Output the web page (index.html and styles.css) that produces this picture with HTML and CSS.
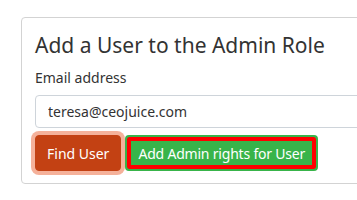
FILE: index.html
```html
<!DOCTYPE html>
<html lang="en">
<head>
  <meta charset="UTF-8" />
  <title>Admin Role</title>
  <link rel="stylesheet" href="styles.css">
</head>
<body>

  <div class="role-card">
    <h3>Add a User to the Admin Role</h3>
    <form id="roleForm">
      <label for="email">Email address</label>
      <input type="email" id="email" name="email" value="teresa@ceojuice.com" />
      <div class="button-row">
        <button type="button" class="find-button">Find User</button>
        <button type="submit" class="admin-button">Add Admin rights for User</button>
      </div>
    </form>
  </div>

</body>
</html>
```

FILE: styles.css
```css
body {
  font-family: "Noto Sans", "Open Sans", sans-serif;
  color: #333;
  background: #fff;
  margin: 0;
  padding: 17px 0 0 21px;
  overflow: hidden;
}

.role-card {
  width: 400px;
  border: 1px solid #d3d3d3;
  border-radius: 4px;
  padding: 14px 13px 12px 13px;
}

.role-card h3 {
  font-size: 21px;
  font-weight: normal;
  line-height: 26px;
  margin: 0 0 10px 0;
}

#roleForm label {
  display: block;
  font-size: 14px;
  line-height: 20px;
  margin-bottom: 7px;
}

#roleForm input {
  display: block;
  width: 100%;
  box-sizing: border-box;
  height: 33px;
  padding: 0 12px;
  font-family: inherit;
  font-size: 14px;
  color: #333;
  border: 1px solid #ced4da;
  border-radius: 4px;
  margin-bottom: 7px;
}

.button-row {
  display: flex;
  gap: 4px;
}

.button-row button {
  height: 36px;
  padding: 0 11px;
  font-family: inherit;
  font-size: 14px;
  color: #fff;
  border-radius: 4px;
  cursor: pointer;
}

.find-button {
  background-color: #c34113;
  border: 1px solid #c34113;
  box-shadow: 0 0 0 4px #f5b19a;
}

.admin-button {
  background-color: #38b44a;
  border: 2px solid #38b44a;
  box-shadow: inset 0 0 0 4px #ff0000;
  padding: 0 7px;
  letter-spacing: -0.2px;
}
```
